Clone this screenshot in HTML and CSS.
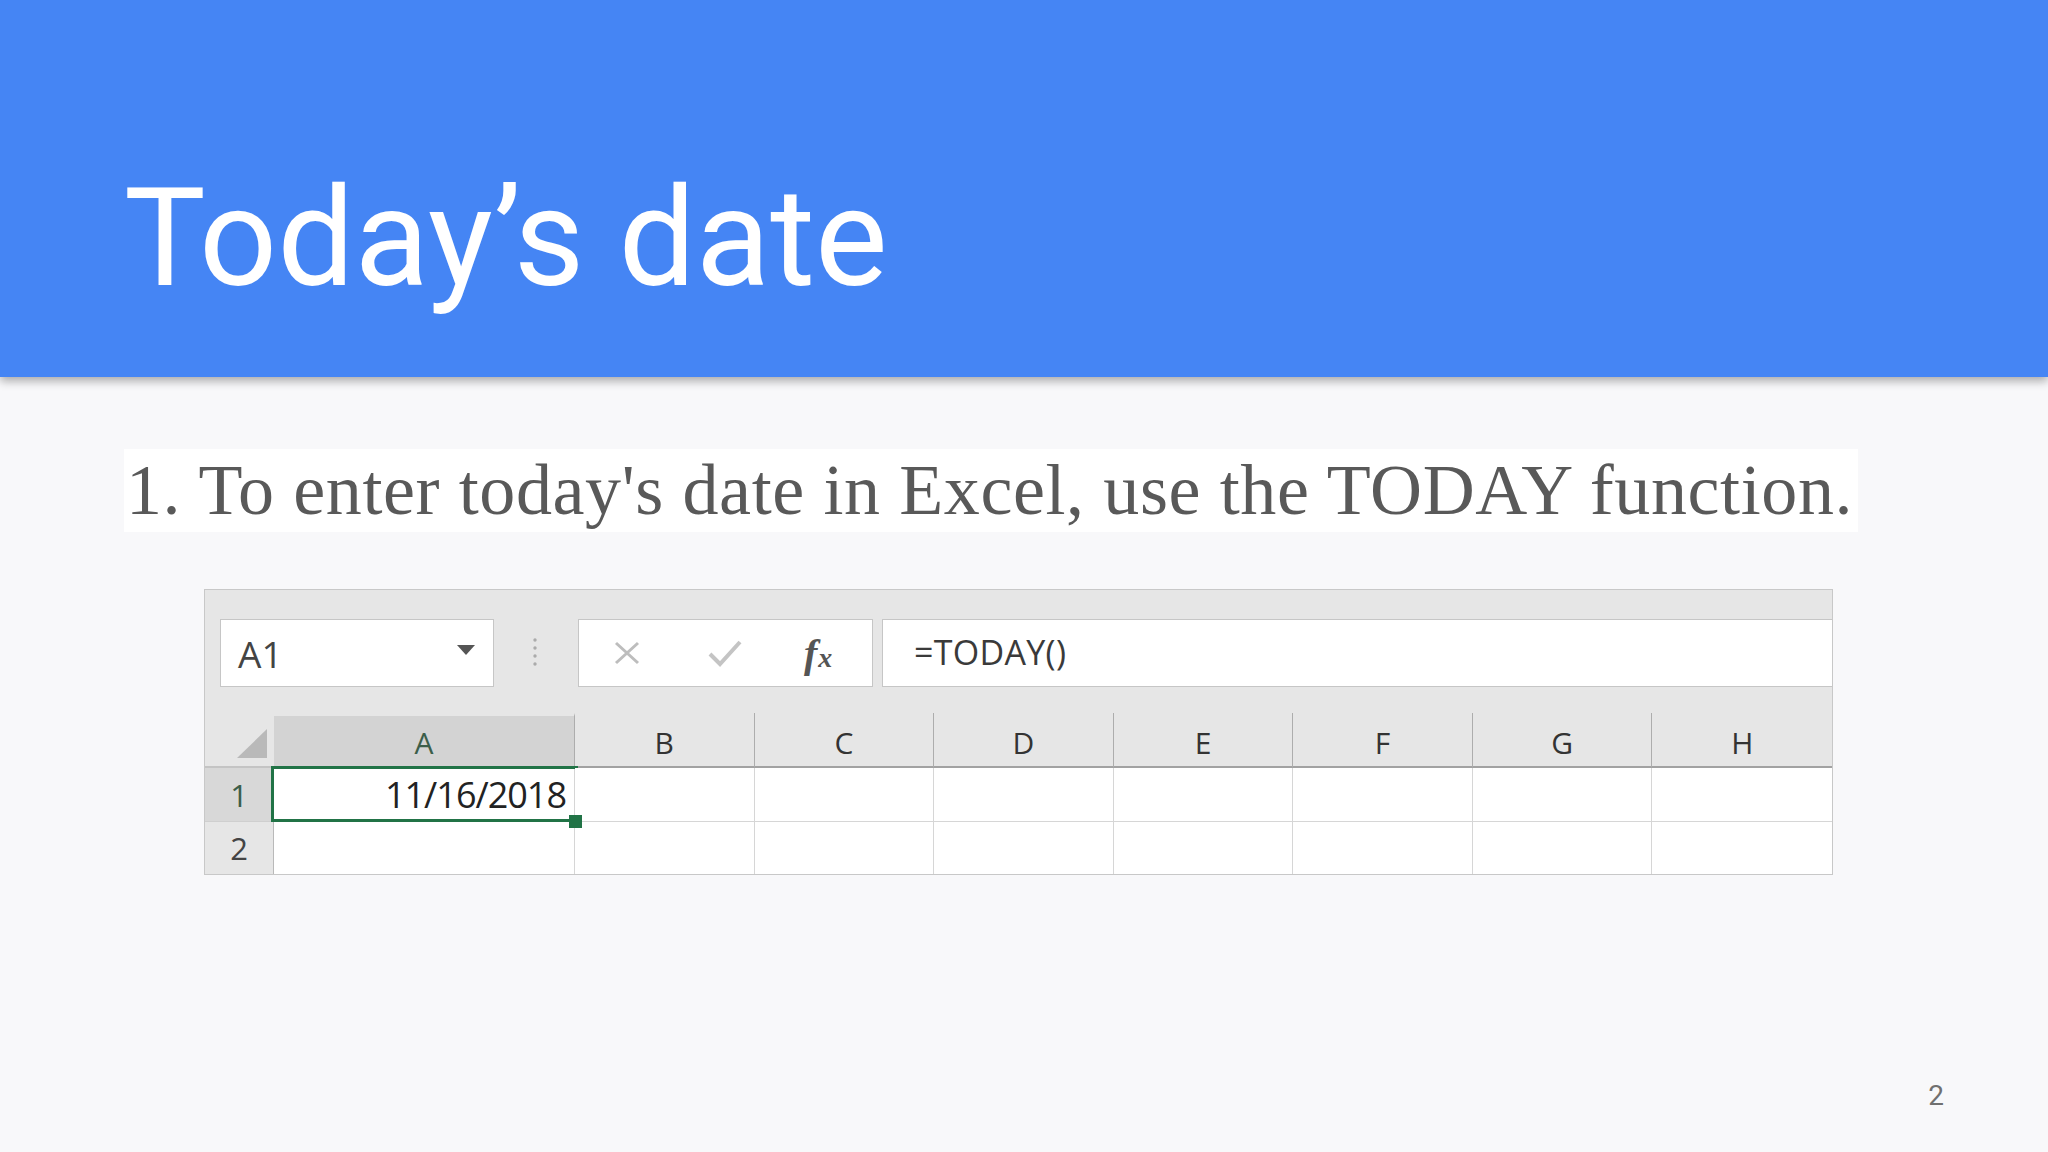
FILE: index.html
```html
<!DOCTYPE html>
<html>
<head>
  <title>Today's date</title>
<link rel="stylesheet" href="styles.css">
</head>
<body>
  <div class="slide">
    <header class="slide_head">
      <h1 class="title">Today’s date</h1>
    </header>

    <div class="point">1. To enter today's date in Excel, use the TODAY function.</div>

    <div class="sheet">
      <div class="toolbar">
        <div class="namebox">
          <span>A1</span>
          <span class="caret"></span>
        </div>
        <svg class="grip" width="6" height="30" viewBox="0 0 6 30">
          <circle cx="3" cy="3" r="1.7"/>
          <circle cx="3" cy="11" r="1.7"/>
          <circle cx="3" cy="19" r="1.7"/>
          <circle cx="3" cy="27" r="1.7"/>
        </svg>
        <div class="fbuttons">
          <svg class="ic_x" width="28" height="24" viewBox="0 0 28 24">
            <path d="M3 2 L25 22 M25 2 L3 22"/>
          </svg>
          <svg class="ic_ok" width="34" height="27" viewBox="0 0 34 27">
            <path d="M2 14 L12 24 L32 2"/>
          </svg>
          <span class="fx"><i>f</i><i class="fx_x">x</i></span>
        </div>
        <div class="fbar">=TODAY()</div>
      </div>

      <div class="grid">
        <div class="corner">
          <svg width="30" height="29" viewBox="0 0 30 29"><polygon points="30,0 30,29 0,29"/></svg>
        </div>
        <div class="colhead sel">A</div>
        <div class="colhead">B</div>
        <div class="colhead">C</div>
        <div class="colhead">D</div>
        <div class="colhead">E</div>
        <div class="colhead">F</div>
        <div class="colhead">G</div>
        <div class="colhead last">H</div>

        <div class="rowhead sel">1</div>
        <div class="cell active">11/16/2018<span class="handle"></span></div>
        <div class="cell"></div>
        <div class="cell"></div>
        <div class="cell"></div>
        <div class="cell"></div>
        <div class="cell"></div>
        <div class="cell"></div>
        <div class="cell last"></div>

        <div class="rowhead bottom">2</div>
        <div class="cell bottom"></div>
        <div class="cell bottom"></div>
        <div class="cell bottom"></div>
        <div class="cell bottom"></div>
        <div class="cell bottom"></div>
        <div class="cell bottom"></div>
        <div class="cell bottom"></div>
        <div class="cell bottom last"></div>
      </div>
    </div>

    <footer class="pagenum">2</footer>
  </div>
</body>
</html>
```

FILE: styles.css
```css
body {
  margin: 0;
  background-color: #f8f8fa;
  font-family: Roboto, "Liberation Sans", sans-serif;
}
.slide {
  display: flex;
  flex-direction: column;
  align-items: flex-start;
  min-height: 1152px;
}
.slide_head {
  align-self: stretch;
  height: 377px;
  background-color: #4585f4;
  box-shadow: 0 4px 9px rgba(0, 0, 0, 0.32);
}
.title {
  margin: 170px 0 0 124px;
  font-family: Roboto, sans-serif;
  font-weight: 400;
  font-size: 137px;
  line-height: 137px;
  color: #fff;
}
.point {
  margin: 72px 0 0 124px;
  padding: 0 5px 0 2px;
  height: 83px;
  line-height: 83px;
  background-color: #fff;
  font-family: "Liberation Serif", serif;
  font-size: 72px;
  letter-spacing: 0.6px;
  color: #595959;
  white-space: nowrap;
}

/* spreadsheet */
.sheet {
  margin: 57px 0 0 204px;
  width: 1629px;
  box-sizing: border-box;
  border: 1px solid #c8c8c8;
  background-color: #e6e6e6;
  font-family: "Open Sans", sans-serif;
  color: #333;
}
.toolbar {
  display: flex;
  align-items: center;
  padding: 29px 0 26px 15px;
}
.namebox {
  display: flex;
  align-items: center;
  justify-content: space-between;
  width: 274px;
  height: 68px;
  box-sizing: border-box;
  padding: 0 18px 0 17px;
  border: 1px solid #c6c6c6;
  background-color: #fff;
  font-size: 37px;
  color: #444;
}
.caret {
  width: 0;
  height: 0;
  border-left: 9px solid transparent;
  border-right: 9px solid transparent;
  border-top: 10px solid #555;
  margin-top: -6px;
}
.grip {
  margin-left: 38px;
  margin-top: -2px;
  fill: #ababab;
}
.fbuttons {
  display: flex;
  align-items: center;
  margin-left: 40px;
  width: 295px;
  height: 68px;
  box-sizing: border-box;
  padding-left: 34px;
  border: 1px solid #c6c6c6;
  background-color: #fff;
}
.ic_x path {
  stroke: #bdbdbd;
  stroke-width: 3;
  fill: none;
}
.ic_ok {
  margin-left: 67px;
}
.ic_ok path {
  stroke: #c4c4c4;
  stroke-width: 4;
  fill: none;
}
.fx {
  margin-left: 62px;
  font-family: "Liberation Serif", serif;
  font-weight: 700;
  color: #555;
  white-space: nowrap;
}
.fx i {
  font-size: 40px;
}
.fx .fx_x {
  font-size: 28px;
  margin-left: 1px;
}
.fbar {
  flex: 1;
  margin-left: 9px;
  height: 68px;
  box-sizing: border-box;
  padding-left: 31px;
  border: 1px solid #c6c6c6;
  border-right: none;
  background-color: #fff;
  font-size: 34px;
  line-height: 64px;
  color: #3a3a3a;
  letter-spacing: 0.3px;
}

.grid {
  display: grid;
  grid-template-columns: 69px 301px repeat(7, 1fr);
  grid-template-rows: 55px 54px 52px;
}
.corner {
  display: flex;
  align-items: flex-end;
  justify-content: flex-end;
  padding: 0 7px 8px 0;
  border-bottom: 2px solid #c4c4c4;
  fill: #b9b9b9;
}
.colhead {
  display: flex;
  align-items: center;
  justify-content: center;
  padding-top: 6px;
  border-right: 1px solid #adadad;
  border-bottom: 2px solid #a2a2a2;
  font-size: 30px;
  color: #333;
}
.colhead.sel {
  border-top: 3px solid #e6e6e6;
  padding-top: 3px;
  background-color: #d3d3d3;
  color: #3c5e4a;
}
.colhead.last {
  border-right: none;
}
.rowhead {
  display: flex;
  align-items: center;
  justify-content: center;
  border-right: 1px solid #b9b9b9;
  border-bottom: 1px solid #cfcfcf;
  font-size: 31px;
  color: #444;
}
.rowhead.sel {
  background-color: #d8d8d8;
  color: #3c5e4a;
}
.cell {
  position: relative;
  background-color: #fff;
  border-right: 1px solid #d6d6d6;
  border-bottom: 1px solid #d6d6d6;
}
.cell.last {
  border-right: none;
}
.bottom {
  border-bottom: none;
}
.cell.active {
  display: flex;
  align-items: center;
  justify-content: flex-end;
  padding-right: 8px;
  font-size: 36px;
  letter-spacing: -1px;
  color: #222;
}
.cell.active::after {
  content: "";
  position: absolute;
  top: -2px;
  left: -3px;
  right: -4px;
  bottom: -1px;
  border: 3px solid #217346;
}
.handle {
  position: absolute;
  right: -8px;
  bottom: -7px;
  width: 13px;
  height: 13px;
  background-color: #217346;
  z-index: 1;
}

.pagenum {
  align-self: flex-end;
  margin-top: auto;
  padding: 0 104px 42px 0;
  font-size: 28px;
  line-height: 28px;
  color: #707070;
}
```
